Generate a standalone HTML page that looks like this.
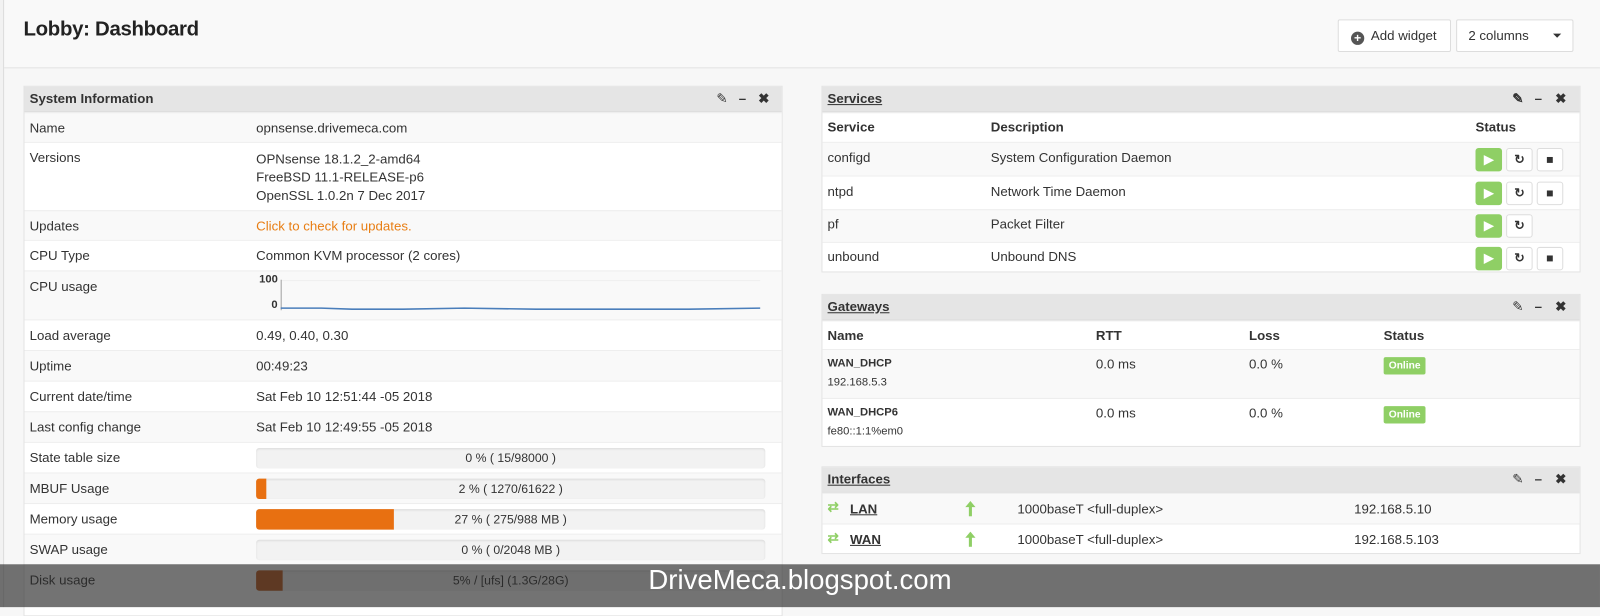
<!DOCTYPE html>
<html><head><meta charset="utf-8"><style>
*{box-sizing:border-box;margin:0;padding:0}
body{width:1600px;height:595px;overflow:hidden;background:#f7f7f7;font-family:"Liberation Sans",sans-serif;font-size:13px;color:#333;position:relative}
#w{position:absolute;left:0;top:0;width:1568px;height:583px;transform:scale(1.0204);transform-origin:0 0}
.hdr{position:absolute;left:0;top:0;width:1568px;height:67px;border-bottom:1px solid #e3e3e3;background:#f9f9f9}
.side{position:absolute;left:0;top:0;width:4px;height:595px;border-right:1px solid #ddd;background:#f2f2f2}
h1{position:absolute;left:23px;top:18px;font-size:20px;font-weight:bold;color:#222;letter-spacing:-0.3px}
.btn{position:absolute;top:19px;height:32px;border:1px solid #ddd;background:#fff;border-radius:2px;font-size:13px;line-height:30px;color:#333}
.panel{position:absolute;background:#fff;border:1px solid #e3e3e3}
.ph{height:25px;background:#e5e5e5;line-height:24px;padding-left:5px;font-weight:bold;font-size:13px;color:#333;position:relative;border-bottom:1px solid #ddd}
.ph u{text-decoration:underline}
.ic{position:absolute;top:0;font-size:13px;font-weight:bold}
.row{position:absolute;left:0;right:0;border-top:1px solid #eee}
.row span{position:absolute}
.g{background:#f9f9f9}
.bar{position:absolute;left:227px;width:499px;height:20px;background:#f2f2f2;border-radius:3px;box-shadow:inset 0 1px 2px rgba(0,0,0,.1);text-align:center;line-height:20px;font-size:12px}
.fill{position:absolute;left:0;top:0;height:20px;background:#e87011;border-radius:3px 0 0 3px}
.sb{position:absolute;width:26px;height:23px;border:1px solid #ddd;border-radius:3px;background:#fff;text-align:center;line-height:21px;font-size:12px;font-weight:bold}
.play{background:#8fcf65;border-color:#8fcf65;color:#fff}
.online{position:absolute;background:#8fcf65;color:#fff;font-size:10px;font-weight:bold;padding:3px 5px;border-radius:2px}
.wm{position:absolute;left:0;top:553px;width:1568px;height:42px;background:rgba(40,40,40,.65);color:#fff;font-size:27px;text-align:center;line-height:28px}
</style></head><body>
<div id="w">
<div class="hdr"></div>
<div class="side"></div>
<h1>Lobby: Dashboard</h1>
<div class="btn" style="left:1311px;width:111px;padding-left:12px"><span style="display:inline-block;width:13px;height:13px;border-radius:50%;background:#555;color:#fff;font-size:12px;line-height:13px;text-align:center;font-weight:bold;vertical-align:-2px">+</span>&nbsp; Add widget</div>
<div class="btn" style="left:1427px;width:115px;padding-left:11px">2 columns<span style="position:absolute;right:11px;top:13px;border:4px solid transparent;border-top:4px solid #333"></span></div>

<div class="panel" style="left:23px;top:84px;width:744px;height:520px">
<div class="ph">System Information<span class="ic" style="left:678px;font-weight:normal">✎</span><span class="ic" style="left:700px">–</span><span class="ic" style="left:719px">✖</span></div>
<div class="row g" style="top:25px;height:29px"><span style="left:5px;top:7px">Name</span><span style="left:227px;top:7px">opnsense.drivemeca.com</span></div>
<div class="row" style="top:54px;height:67px"><span style="left:5px;top:7px">Versions</span><span style="left:227px;top:7px;line-height:18px">OPNsense 18.1.2_2-amd64<br>FreeBSD 11.1-RELEASE-p6<br>OpenSSL 1.0.2n 7 Dec 2017</span></div>
<div class="row g" style="top:121px;height:29px"><span style="left:5px;top:7px">Updates</span><span style="left:227px;top:7px;color:#e87e14">Click to check for updates.</span></div>
<div class="row" style="top:150px;height:30px"><span style="left:5px;top:7px">CPU Type</span><span style="left:227px;top:7px">Common KVM processor (2 cores)</span></div>
<div class="row g" style="top:180px;height:48px"><span style="left:5px;top:7px">CPU usage</span>
<span style="left:230px;top:2px;font-size:11px;font-weight:bold">100</span><span style="left:242px;top:27px;font-size:11px;font-weight:bold">0</span>
<svg style="position:absolute;left:251px;top:8px" width="472" height="32"><line x1="0" y1="1" x2="470" y2="1" stroke="#eee"/><line x1="0.5" y1="0" x2="0.5" y2="30" stroke="#999"/><polyline points="0,28 40,28 70,29 120,29 180,28 250,29 320,29 400,29 470,28" fill="none" stroke="#4a7ebb" stroke-width="1.5"/></svg></div>
<div class="row" style="top:228px;height:30px"><span style="left:5px;top:7px">Load average</span><span style="left:227px;top:7px">0.49, 0.40, 0.30</span></div>
<div class="row g" style="top:258px;height:30px"><span style="left:5px;top:7px">Uptime</span><span style="left:227px;top:7px">00:49:23</span></div>
<div class="row" style="top:288px;height:30px"><span style="left:5px;top:7px">Current date/time</span><span style="left:227px;top:7px">Sat Feb 10 12:51:44 -05 2018</span></div>
<div class="row g" style="top:318px;height:30px"><span style="left:5px;top:7px">Last config change</span><span style="left:227px;top:7px">Sat Feb 10 12:49:55 -05 2018</span></div>
<div class="row" style="top:348px;height:30px"><span style="left:5px;top:7px">State table size</span><div class="bar" style="top:5px">0 % ( 15/98000 )</div></div>
<div class="row g" style="top:378px;height:30px"><span style="left:5px;top:7px">MBUF Usage</span><div class="bar" style="top:5px"><div class="fill" style="width:10px"></div><span style="position:relative">2 % ( 1270/61622 )</span></div></div>
<div class="row" style="top:408px;height:30px"><span style="left:5px;top:7px">Memory usage</span><div class="bar" style="top:5px"><div class="fill" style="width:135px"></div><span style="position:relative">27 % ( 275/988 MB )</span></div></div>
<div class="row g" style="top:438px;height:30px"><span style="left:5px;top:7px">SWAP usage</span><div class="bar" style="top:5px">0 % ( 0/2048 MB )</div></div>
<div class="row" style="top:468px;height:30px"><span style="left:5px;top:7px">Disk usage</span><div class="bar" style="top:5px"><div class="fill" style="width:26px;background:#c45a1a"></div><span style="position:relative">5% / [ufs] (1.3G/28G)</span></div></div>
</div>

<div class="panel" style="left:805px;top:84px;width:744px;height:183px">
<div class="ph"><u>Services</u><span class="ic" style="left:676px">✎</span><span class="ic" style="left:698px">–</span><span class="ic" style="left:718px">✖</span></div>
<div class="row" style="top:25px;height:29px;font-weight:bold"><span style="left:5px;top:6px">Service</span><span style="left:165px;top:6px">Description</span><span style="left:640px;top:6px">Status</span></div>
<div class="row g" style="top:54px;height:33px"><span style="left:5px;top:7px">configd</span><span style="left:165px;top:7px">System Configuration Daemon</span><div class="sb play" style="left:640px;top:5px">▶</div><div class="sb" style="left:670px;top:5px">↻</div><div class="sb" style="left:700px;top:5px">■</div></div>
<div class="row" style="top:87px;height:33px"><span style="left:5px;top:7px">ntpd</span><span style="left:165px;top:7px">Network Time Daemon</span><div class="sb play" style="left:640px;top:5px">▶</div><div class="sb" style="left:670px;top:5px">↻</div><div class="sb" style="left:700px;top:5px">■</div></div>
<div class="row g" style="top:120px;height:32px"><span style="left:5px;top:6px">pf</span><span style="left:165px;top:6px">Packet Filter</span><div class="sb play" style="left:640px;top:4px">▶</div><div class="sb" style="left:670px;top:4px">↻</div></div>
<div class="row" style="top:152px;height:30px"><span style="left:5px;top:6px">unbound</span><span style="left:165px;top:6px">Unbound DNS</span><div class="sb play" style="left:640px;top:4px">▶</div><div class="sb" style="left:670px;top:4px">↻</div><div class="sb" style="left:700px;top:4px">■</div></div>
</div>

<div class="panel" style="left:805px;top:288px;width:744px;height:150px">
<div class="ph"><u>Gateways</u><span class="ic" style="left:676px;font-weight:normal">✎</span><span class="ic" style="left:698px">–</span><span class="ic" style="left:718px">✖</span></div>
<div class="row" style="top:25px;height:28px;font-weight:bold"><span style="left:5px;top:6px">Name</span><span style="left:268px;top:6px">RTT</span><span style="left:418px;top:6px">Loss</span><span style="left:550px;top:6px">Status</span></div>
<div class="row g" style="top:53px;height:48px"><span style="left:5px;top:7px;font-size:11px;font-weight:bold">WAN_DHCP</span><span style="left:5px;top:26px;font-size:11px">192.168.5.3</span><span style="left:268px;top:6px">0.0 ms</span><span style="left:418px;top:6px">0.0 %</span><div class="online" style="left:550px;top:7px">Online</div></div>
<div class="row" style="top:101px;height:48px"><span style="left:5px;top:7px;font-size:11px;font-weight:bold">WAN_DHCP6</span><span style="left:5px;top:26px;font-size:11px">fe80::1:1%em0</span><span style="left:268px;top:6px">0.0 ms</span><span style="left:418px;top:6px">0.0 %</span><div class="online" style="left:550px;top:7px">Online</div></div>
</div>

<div class="panel" style="left:805px;top:457px;width:744px;height:86px">
<div class="ph"><u>Interfaces</u><span class="ic" style="left:676px;font-weight:normal">✎</span><span class="ic" style="left:698px">–</span><span class="ic" style="left:718px">✖</span></div>
<div class="row g" style="top:25px;height:30px"><span style="left:5px;top:5px;color:#8fcf65;font-weight:bold">⇄</span><span style="left:27px;top:7px;text-decoration:underline;font-weight:bold">LAN</span><svg style="position:absolute;left:139px;top:7px" width="12" height="15"><path d="M6 0 L11 6 H7.5 V15 H4.5 V6 H1 Z" fill="#8fcf65"/></svg><span style="left:191px;top:7px">1000baseT &lt;full-duplex&gt;</span><span style="left:521px;top:7px">192.168.5.10</span></div>
<div class="row" style="top:55px;height:30px"><span style="left:5px;top:5px;color:#8fcf65;font-weight:bold">⇄</span><span style="left:27px;top:7px;text-decoration:underline;font-weight:bold">WAN</span><svg style="position:absolute;left:139px;top:7px" width="12" height="15"><path d="M6 0 L11 6 H7.5 V15 H4.5 V6 H1 Z" fill="#8fcf65"/></svg><span style="left:191px;top:7px">1000baseT &lt;full-duplex&gt;</span><span style="left:521px;top:7px">192.168.5.103</span></div>
</div>

<div class="wm"><span style="position:relative;left:0px;top:1px">DriveMeca.blogspot.com</span></div>
</div>
</body></html>
